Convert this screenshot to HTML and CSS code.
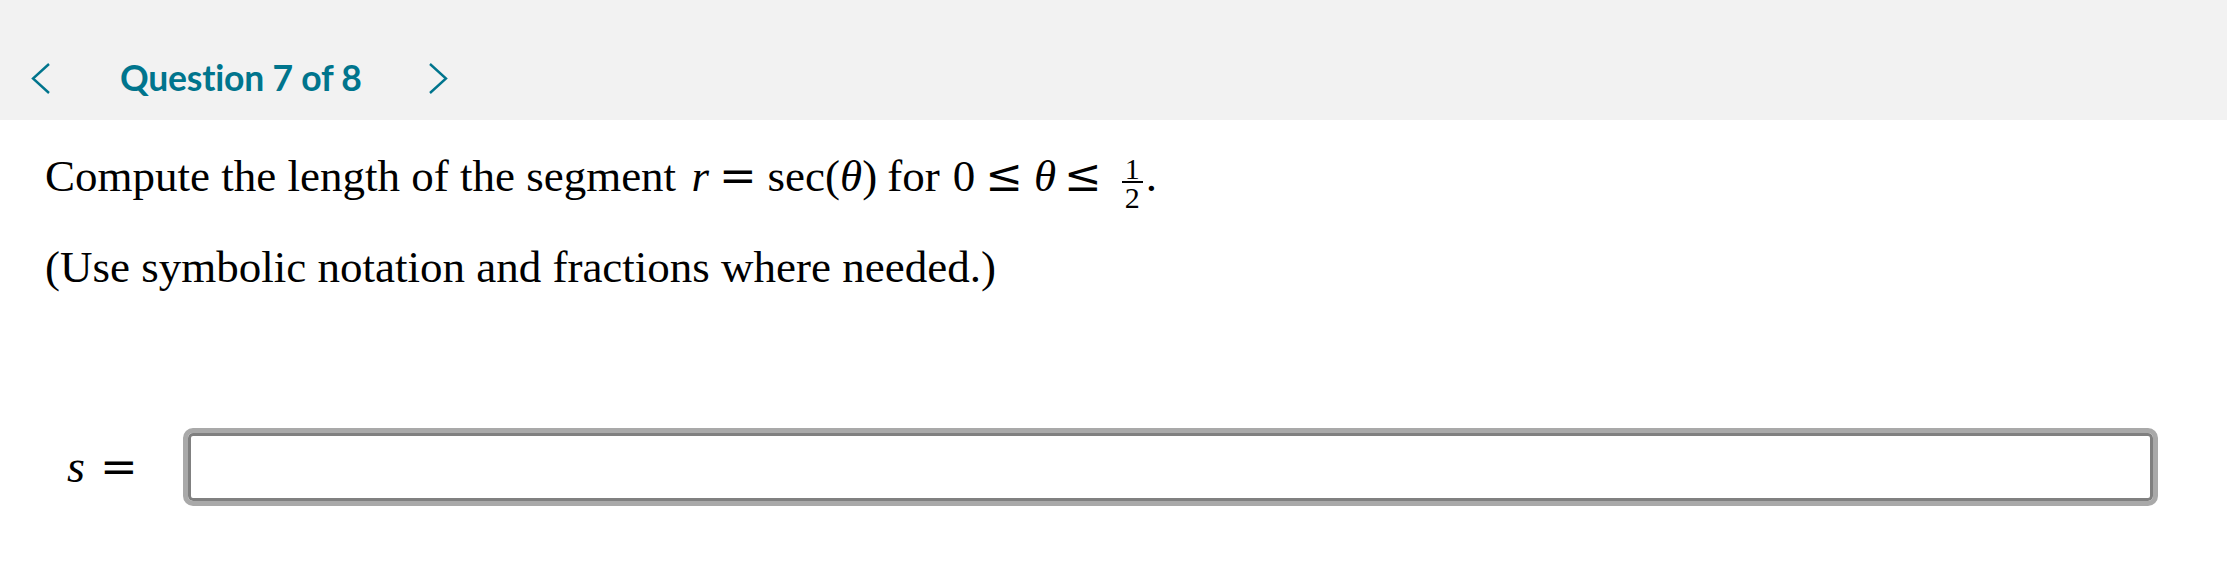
FILE: index.html
```html
<!DOCTYPE html>
<html lang="en">
<head>
<meta charset="utf-8">
<title>Question 7 of 8</title>
<link rel="stylesheet" href="styles.css">
</head>
<body>
<header class="header">
  <button class="nav" aria-label="Previous question">
    <svg class="chev" width="19" height="31" viewBox="0 0 19 31"><polyline points="18,1 2,15.5 18,30" fill="none" stroke="currentColor" stroke-width="2.4"/></svg>
  </button>
  <span class="title">Question 7 of 8</span>
  <button class="nav" aria-label="Next question">
    <svg class="chev" width="19" height="31" viewBox="0 0 19 31"><polyline points="1,1 17,15.5 1,30" fill="none" stroke="currentColor" stroke-width="2.4"/></svg>
  </button>
</header>
<main class="content">
  <p class="q">Compute the length of the segment <span class="math"><i class="var">r</i><span class="rel">=</span>sec(<i class="var">θ</i>)<span class="word">for</span>0<span class="rel">≤</span><i class="var">θ</i><span class="rel rel-last">≤</span><span class="frac"><span class="num">1</span><span class="den">2</span></span><span class="dot">.</span></span></p>
  <p class="q second">(Use symbolic notation and fractions where needed.)</p>
  <div class="answer">
    <span class="lbl"><i class="var">s</i><span class="rel">=</span></span>
    <div class="field" role="textbox" aria-label="s"></div>
  </div>
</main>
</body>
</html>
```
FILE: styles.css
```css
html, body {
  margin: 0;
  padding: 0;
  background: #ffffff;
}
body {
  font-family: "Liberation Serif", "Times New Roman", serif;
  color: #000;
}
.header {
  display: flex;
  align-items: center;
  gap: 70px;
  height: 120px;
  box-sizing: border-box;
  padding: 36px 0 0 31px;
  background: #f2f2f2;
  color: #00758d;
}
.nav {
  display: flex;
  align-items: center;
  padding: 0;
  border: 0;
  background: none;
  color: inherit;
}
.chev {
  display: block;
}
.title {
  font-family: Lato, "Open Sans", sans-serif;
  font-weight: 700;
  font-size: 35.5px;
  line-height: 40px;
  letter-spacing: -0.2px;
  margin-right: -3px;
}
.content {
  padding: 0 69px 0 45px;
}
.q {
  margin: 30px 0 0 0;
  font-size: 45px;
  line-height: 52px;
  height: 52px;
}
.q.second {
  margin-top: 39px;
}
.math {
  margin-left: 4px;
}
.var {
  font-style: italic;
}
.rel {
  display: inline-block;
  font-family: "DejaVu Serif", serif;
  font-size: 45px;
  line-height: 0;
  margin: 0 11px 0 10px;
}
.rel-last {
  margin-left: 8px;
  margin-right: 20px;
}
.word {
  margin: 0 13px 0 10px;
}
.frac {
  display: inline-flex;
  flex-direction: column;
  align-items: center;
  vertical-align: 12px;
  margin: -20px 0 -20px 0;
  font-size: 30px;
}
.num {
  line-height: 24px;
  padding: 0 3px;
  border-bottom: 2px solid #000;
}
.den {
  line-height: 30px;
}
.dot {
  margin-left: 3px;
}
.answer {
  display: flex;
  align-items: center;
  margin-top: 135px;
}
.lbl {
  flex: 0 0 138px;
  box-sizing: border-box;
  padding-left: 22px;
  font-size: 46px;
  line-height: 52px;
}
.lbl .rel {
  margin: 0 0 0 15px;
}
.field {
  flex: 1;
  height: 78px;
  box-sizing: border-box;
  border: 5px solid #a9a9a9;
  border-radius: 10px;
  box-shadow: inset 0 0 0 3px #808080;
  background: #fff;
}
```
